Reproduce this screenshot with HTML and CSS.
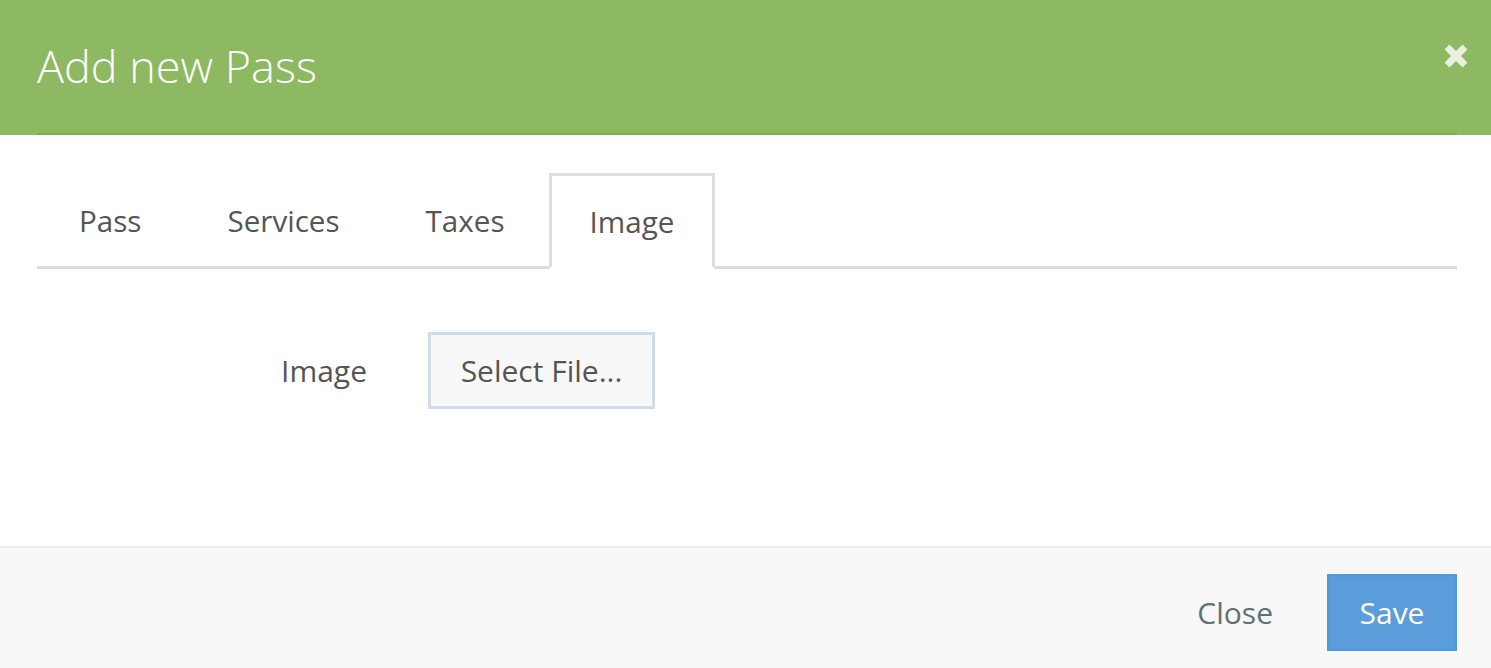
FILE: index.html
```html
<!DOCTYPE html>
<html lang="en">
<head>
  <meta charset="UTF-8">
  <title>Add new Pass</title>
  <link rel="stylesheet" href="styles.css">
</head>
<body>
  <div class="modal">
    <!-- Header -->
    <div class="modal-header">
      <div class="header-inner">
        <h1 class="title">Add new Pass</h1>
        <button class="close-x" aria-label="Close">
          <svg width="26" height="26" viewBox="0 0 26 26">
            <path d="M4 4 L22 22 M22 4 L4 22" stroke="#eaf1e2" stroke-width="7" stroke-linecap="butt"/>
          </svg>
        </button>
      </div>
    </div>

    <!-- Body -->
    <div class="modal-body">
      <ul class="tabs">
        <li class="tab">Pass</li>
        <li class="tab">Services</li>
        <li class="tab">Taxes</li>
        <li class="tab active">Image</li>
      </ul>

      <div class="form-row">
        <label class="form-label">Image</label>
        <div class="form-field">
          <button class="file-btn">Select File...</button>
        </div>
      </div>
    </div>

    <!-- Footer -->
    <div class="modal-footer">
      <button class="btn-link">Close</button>
      <button class="btn-save">Save</button>
    </div>
  </div>
</body>
</html>
```

FILE: styles.css
```css
body {
  margin: 0;
  background: #fff;
  overflow: hidden;
  font-family: "Open Sans", "Noto Sans", sans-serif;
  color: #555;
}

.modal {
  width: 1491px;
  height: 668px;
  display: flex;
  flex-direction: column;
}

/* Header */
.modal-header {
  background: #8db962;
  height: 135px;
  padding: 0 34px 0 37px;
  box-sizing: border-box;
}

.header-inner {
  height: 135px;
  box-sizing: border-box;
  border-bottom: 2px solid #7fac53;
  width: 1420px;
  display: flex;
  align-items: flex-start;
  justify-content: space-between;
  position: relative;
}

.title {
  margin: 0;
  padding-top: 37px;
  font-size: 45px;
  font-weight: 300;
  color: #fff;
  line-height: 1.3;
}

.close-x {
  position: absolute;
  right: -12px;
  top: 43px;
  background: none;
  border: 0;
  padding: 0;
  line-height: 0;
  cursor: pointer;
}

/* Body */
.modal-body {
  padding: 38px 34px 0 37px;
  flex: 1;
}

.tabs {
  list-style: none;
  margin: 0;
  padding: 0;
  display: flex;
  width: 1420px;
  border-bottom: 3px solid #dddddd;
}

.tab {
  padding: 0 40px;
  height: 96px;
  line-height: 92px;
  font-size: 29.6px;
  color: #555;
  border: 2px solid transparent;
  border-bottom: 0;
  margin-right: 2px;
  margin-bottom: -3px;
  box-sizing: border-box;
}

.tab.active {
  border: 3px solid #dddddd;
  border-bottom: 3px solid #fff;
  background: #fff;
  padding: 0 38px;
}

.form-row {
  display: flex;
  align-items: center;
  margin-top: 63px;
}

.form-label {
  width: 330px;
  text-align: right;
  font-size: 30px;
  color: #555;
}

.form-field {
  margin-left: 61px;
}

.file-btn {
  width: 227px;
  height: 77px;
  background: #f8f8f8;
  border: 3px solid #d3dbe6;
  font-family: inherit;
  font-size: 30px;
  color: #555;
  padding: 0;
  cursor: pointer;
}

/* Footer */
.modal-footer {
  height: 122px;
  background: #f8f8f8;
  border-top: 2px solid #ececec;
  box-sizing: border-box;
  display: flex;
  justify-content: flex-end;
  align-items: flex-start;
  padding: 26px 34px 0 0;
}

.btn-link {
  background: none;
  border: 0;
  font-family: inherit;
  font-size: 30px;
  color: #5e7373;
  height: 77px;
  padding: 0 54px 0 0;
  cursor: pointer;
}

.btn-save {
  width: 130px;
  height: 77px;
  background: #5b9ddb;
  border: 3px solid #519ad9;
  color: #fff;
  font-family: inherit;
  font-size: 30px;
  padding: 0;
  cursor: pointer;
}
```
